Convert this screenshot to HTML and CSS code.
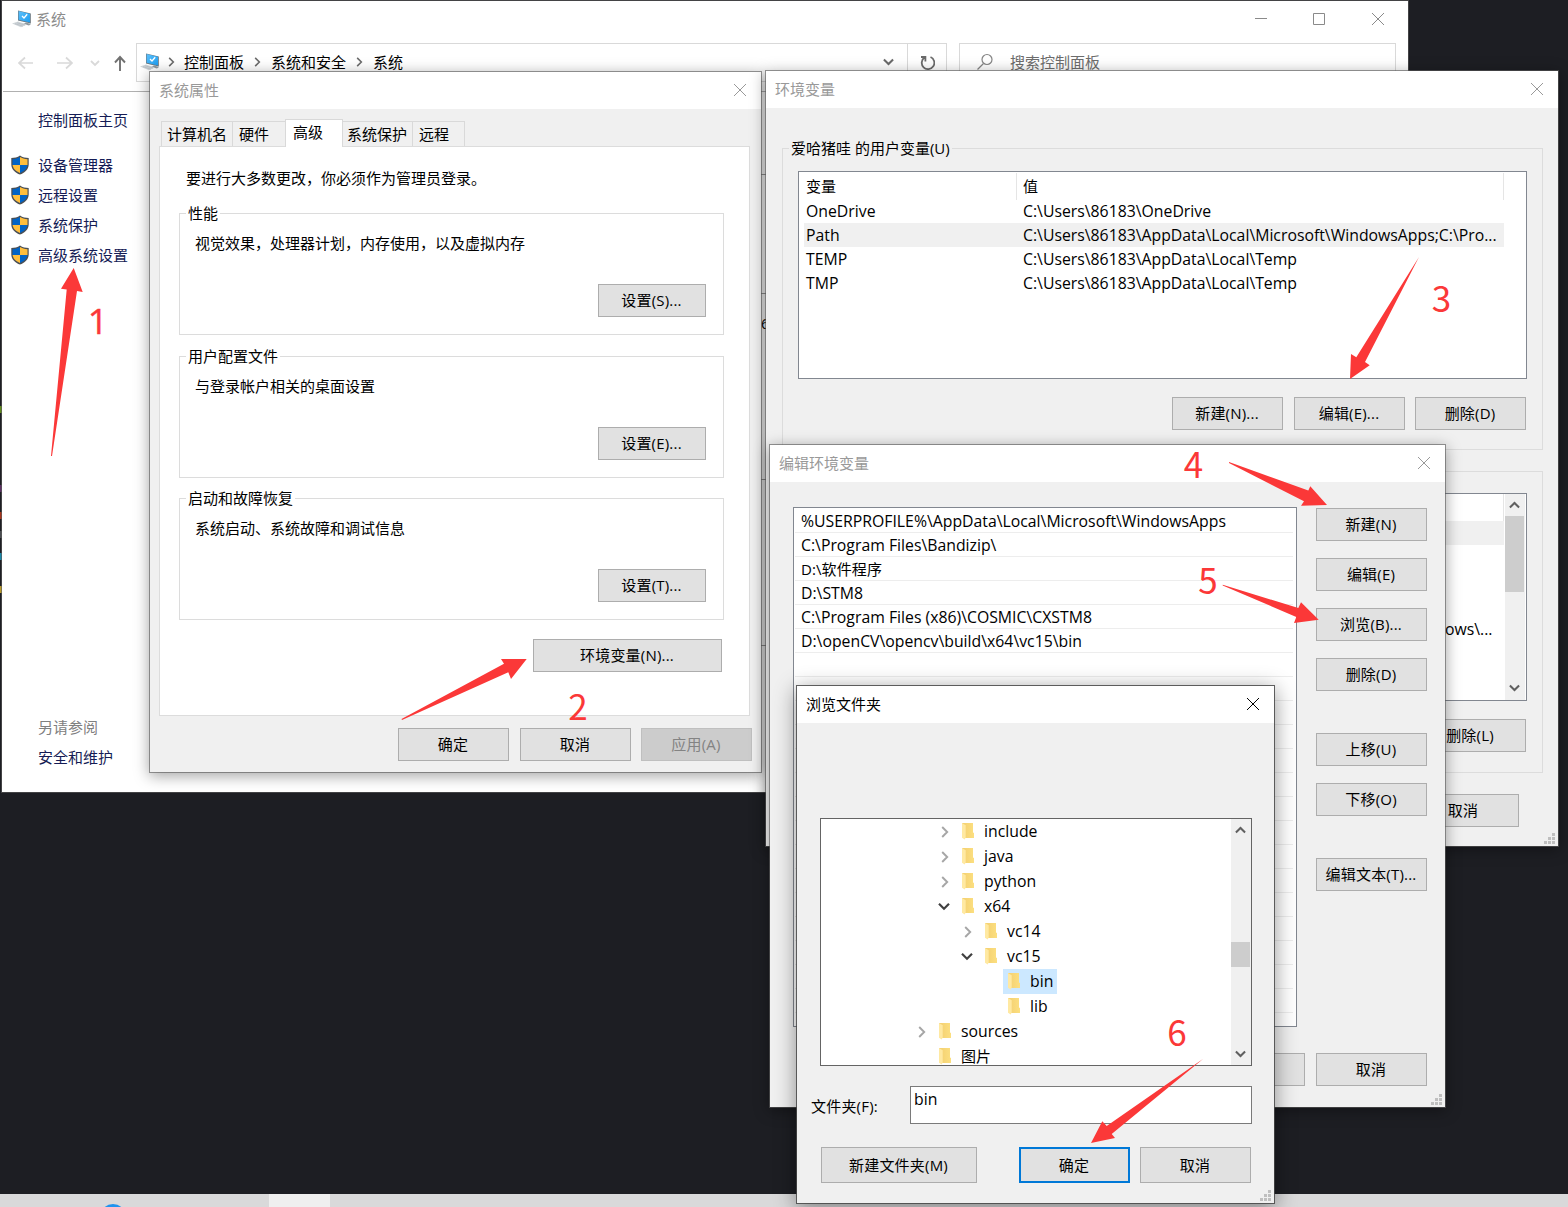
FILE: index.html
```html
<!DOCTYPE html>
<html lang="zh-CN">
<head>
<meta charset="utf-8">
<title>系统</title>
<link rel="stylesheet" href="styles.css">
</head>
<body>
<svg class="defs" width="0" height="0" aria-hidden="true">
  <defs>
    <linearGradient id="folder-front" x1="0" x2="1" y1="0" y2="0"><stop offset="0" stop-color="#f3cf70"/><stop offset="1" stop-color="#fcdf80"/></linearGradient>
    <linearGradient id="screen-blue" x1="0" x2="1" y1="0" y2="1"><stop offset="0" stop-color="#5cc0fb"/><stop offset="1" stop-color="#1d9df0"/></linearGradient>
  </defs>
  <symbol id="close" viewBox="0 0 14 14"><path d="M1 1L13 13M13 1L1 13" fill="none" stroke="currentColor"/></symbol>
  <symbol id="shield" viewBox="0 0 18 20">
    <path d="M9 .5C6.500 2.300 3.500 3 .3 3V9.500C.3 14.500 4.500 18 9 19.600 13.500 18 17.700 14.500 17.700 9.500V3C14.500 3 11.500 2.300 9 .5Z" fill="#4a4f55"/>
    <path d="M9 2C7 3.300 4.500 4 1.500 4.200V10H9Z" fill="#0063c6"/><path d="M9 2C11 3.300 13.500 4 16.500 4.200V10H9Z" fill="#ffbe3c"/>
    <path d="M1.600 10H9V18C5 16.500 2 13.500 1.600 10Z" fill="#ffbe3c"/><path d="M16.400 10H9V18C13 16.500 16 13.500 16.400 10Z" fill="#0063c6"/>
  </symbol>
  <symbol id="pc" viewBox="0 0 20 18">
    <path d="M14 12.500L19 14 17 15.500 11 14Z" fill="#8e989f"/>
    <path d="M6 .5L18.800 3.500V13.500L6 10.500Z" fill="#69757d"/>
    <path d="M6.600 1L18 3.700V12.400L6.600 9.700Z" fill="url(#screen-blue)"/>
    <path d="M10 6L12 8 15.200 4.300" fill="none" stroke="#fff" stroke-width="1.300"/>
    <path d="M0 13.500L6 11.500 15 14.500 9 17.300Z" fill="#cfd5d9"/><path d="M3 13.700L11 16.200M5 12.800L13 15" stroke="#aeb6bc" stroke-width=".6"/>
  </symbol>
  <symbol id="folder" viewBox="0 0 13 18">
    <path d="M1 1H12V10.500L13 11V16H2Z" fill="url(#folder-front)"/>
    <path d="M1 1L4.700 3.300V15.500L3.700 17.500 1 15.800Z" fill="#ffe9a2"/>
  </symbol>
  <symbol id="right" viewBox="0 0 8 12"><path d="M1.200 1L6.200 6 1.200 11" fill="none" stroke="currentColor" stroke-width="1.900"/></symbol>
  <symbol id="down" viewBox="0 0 12 8"><path d="M1 1.200L6 6.200 11 1.200" fill="none" stroke="currentColor" stroke-width="2.200"/></symbol>
  <symbol id="up" viewBox="0 0 12 8"><path d="M1 6.800L6 1.800 11 6.800" fill="none" stroke="currentColor" stroke-width="2.200"/></symbol>
  <symbol id="grip" viewBox="0 0 11 11"><path d="M8 0h3v3h-3zM4 4h3v3h-3zM8 4h3v3h-3zM0 8h3v3h-3zM4 8h3v3h-3zM8 8h3v3h-3z" fill="#bfbfbf"/></symbol>
</svg>

<div class="desktop">
  <div class="edge">
    <i class="green"></i><i class="purple"></i><i class="red"></i><i class="gray"></i><i class="cyan"></i><i class="yellow"></i>
  </div>

  <footer class="taskbar"><span class="browser"></span><span class="task"></span></footer>

  <section class="window system">
    <header class="system-title">
      <svg class="pc"><use href="#pc"/></svg><span>系统</span>
      <svg class="controls" width="132" height="14" viewBox="0 0 132 14" fill="none" stroke="#8a8a8a"><path d="M1 6.500H13M59.500 1.500h11v11h-11zM118 1L130 13M130 1L118 13"/></svg>
    </header>
    <nav class="nav">
      <svg class="history" width="112" height="18" viewBox="0 0 112 18" fill="none">
        <g stroke="#d9d9d9" stroke-width="1.700"><path d="M15 10H1M7 4.500L1 10L7 15.500M39 10H54M48 4.500L54 10L48 15.500"/><path d="M73 8L77 12L81 8" stroke-width="1.800"/></g>
        <path d="M102 18V4M97 9.500L102 4L107 9.500" stroke="#717171" stroke-width="1.900"/>
      </svg>
      <div class="address">
        <svg class="pc"><use href="#pc"/></svg>
        <svg class="crumb"><use href="#right"/></svg><span>控制面板</span>
        <svg class="crumb"><use href="#right"/></svg><span>系统和安全</span>
        <svg class="crumb"><use href="#right"/></svg><span>系统</span>
        <svg class="drop"><use href="#down"/></svg>
        <span class="refresh"><svg width="16" height="16" viewBox="0 0 16 16" fill="none" stroke="#6b6b6b" stroke-width="1.800"><path d="M11.500 3A6.300 6.300 0 1 1 5.500 3.600M2 3H6.400V7.500"/></svg></span>
      </div>
      <div class="search"><svg width="18" height="18" viewBox="0 0 18 18" fill="none" stroke="#858585" stroke-width="1.200"><circle cx="11" cy="6.500" r="5"/><path d="M7.500 10.500L1.500 16.500"/></svg><span>搜索控制面板</span></div>
    </nav>
    <div class="system-body">
      <aside class="side">
        <a class="home">控制面板主页</a>
        <a><svg><use href="#shield"/></svg>设备管理器</a>
        <a><svg><use href="#shield"/></svg>远程设置</a>
        <a><svg><use href="#shield"/></svg>系统保护</a>
        <a><svg><use href="#shield"/></svg>高级系统设置</a>
        <span class="see-also">另请参阅</span>
        <a class="plain">安全和维护</a>
      </aside>
      <div class="details"><hr><hr><span>6</span><hr><hr></div>
    </div>
  </section>

  <section class="window props">
    <header class="bar"><span>系统属性</span><svg><use href="#close"/></svg></header>
    <div class="tabs"><span class="t1">计算机名</span><span class="t2">硬件</span><span class="active">高级</span><span class="t3">系统保护</span><span class="t4">远程</span></div>
    <div class="page">
      <p class="lead">要进行大多数更改，你必须作为管理员登录。</p>
      <fieldset><legend>性能</legend><p>视觉效果，处理器计划，内存使用，以及虚拟内存</p><button>设置(S)...</button></fieldset>
      <fieldset><legend>用户配置文件</legend><p>与登录帐户相关的桌面设置</p><button>设置(E)...</button></fieldset>
      <fieldset class="last"><legend>启动和故障恢复</legend><p>系统启动、系统故障和调试信息</p><button>设置(T)...</button></fieldset>
      <button class="env-button">环境变量(N)...</button>
    </div>
    <div class="actions"><button>确定</button><button>取消</button><button disabled>应用(A)</button></div>
  </section>

  <section class="window env">
    <header class="bar"><span>环境变量</span><svg><use href="#close"/></svg></header>
    <fieldset class="user-vars">
      <legend>爱哈猪哇 的用户变量(U)</legend>
      <div class="vars">
        <div class="head"><span>变量</span><span>值</span></div>
        <div class="row"><span>OneDrive</span><span>C:\Users\86183\OneDrive</span></div>
        <div class="row selected"><span>Path</span><span>C:\Users\86183\AppData\Local\Microsoft\WindowsApps;C:\Pro...</span></div>
        <div class="row"><span>TEMP</span><span>C:\Users\86183\AppData\Local\Temp</span></div>
        <div class="row"><span>TMP</span><span>C:\Users\86183\AppData\Local\Temp</span></div>
      </div>
      <div class="var-actions"><button>新建(N)...</button><button>编辑(E)...</button><button>删除(D)</button></div>
    </fieldset>
    <fieldset class="system-vars">
      <legend></legend>
      <div class="vars scrolled">
        <div class="rows"><div class="head"></div><div class="band"></div><div class="tail">ows\...</div></div>
        <div class="scroll"><svg><use href="#up"/></svg><i></i><svg><use href="#down"/></svg></div>
      </div>
      <div class="var-actions"><button>删除(L)</button></div>
    </fieldset>
    <div class="confirm"><button>取消</button></div>
    <svg class="grip"><use href="#grip"/></svg>
  </section>

  <section class="window edit">
    <header class="bar"><span>编辑环境变量</span><svg><use href="#close"/></svg></header>
    <div class="edit-body">
      <ul class="paths">
        <li>%USERPROFILE%\AppData\Local\Microsoft\WindowsApps</li>
        <li>C:\Program Files\Bandizip\</li>
        <li class="mixed">D:\软件程序</li>
        <li>D:\STM8</li>
        <li>C:\Program Files (x86)\COSMIC\CXSTM8</li>
        <li>D:\openCV\opencv\build\x64\vc15\bin</li>
      </ul>
      <div class="stack">
        <button>新建(N)</button><button>编辑(E)</button><button>浏览(B)...</button><button>删除(D)</button>
        <button class="apart">上移(U)</button><button>下移(O)</button>
        <button class="apart">编辑文本(T)...</button>
      </div>
    </div>
    <div class="confirm"><button></button><button>取消</button></div>
    <svg class="grip"><use href="#grip"/></svg>
  </section>

  <section class="window browse">
    <header class="bar"><span>浏览文件夹</span><svg><use href="#close"/></svg></header>
    <div class="tree">
      <ul>
        <li class="l2"><svg class="tw"><use href="#right"/></svg><span><svg><use href="#folder"/></svg>include</span></li>
        <li class="l2"><svg class="tw"><use href="#right"/></svg><span><svg><use href="#folder"/></svg>java</span></li>
        <li class="l2"><svg class="tw"><use href="#right"/></svg><span><svg><use href="#folder"/></svg>python</span></li>
        <li class="l2"><svg class="tw open"><use href="#down"/></svg><span><svg><use href="#folder"/></svg>x64</span></li>
        <li class="l3"><svg class="tw"><use href="#right"/></svg><span><svg><use href="#folder"/></svg>vc14</span></li>
        <li class="l3"><svg class="tw open"><use href="#down"/></svg><span><svg><use href="#folder"/></svg>vc15</span></li>
        <li class="l4"><svg class="tw"></svg><span class="picked"><svg><use href="#folder"/></svg>bin</span></li>
        <li class="l4"><svg class="tw"></svg><span><svg><use href="#folder"/></svg>lib</span></li>
        <li class="l1"><svg class="tw"><use href="#right"/></svg><span><svg><use href="#folder"/></svg>sources</span></li>
        <li class="l1 mixed"><svg class="tw"></svg><span><svg><use href="#folder"/></svg>图片</span></li>
      </ul>
      <div class="scroll"><svg><use href="#up"/></svg><i></i><svg><use href="#down"/></svg></div>
    </div>
    <div class="field"><label>文件夹(F):</label><div class="input">bin</div></div>
    <div class="browse-actions"><button class="new">新建文件夹(M)</button><button class="primary">确定</button><button>取消</button></div>
    <svg class="grip"><use href="#grip"/></svg>
  </section>

  <svg class="notes" width="1568" height="1207" viewBox="0 0 1568 1207">
    <path d="M73.700 268L82.700 292L77 291L52 456H51L66.700 289.500L61 288.700Z"/>
    <path d="M526.700 659L511 679L508.300 672.300L402 720L401.500 719L504 663.700L501 659Z"/>
    <path d="M1350 379L1351 354L1356.300 357.300L1419 257L1365 362L1369.700 365.300Z"/>
    <path d="M1327 505L1301 505.700L1304 501.300L1229 463V462L1308.300 490.500L1310.300 486.300Z"/>
    <path d="M1318.700 619.700L1294 623L1296.300 617L1222.700 585.500V584.800L1298.300 608L1301 602.300Z"/>
    <path d="M1091 1143L1102.300 1121.300L1106.700 1126L1203.300 1058.700L1111.700 1134L1115 1138Z"/>
    <text class="one" x="98" y="334">1</text><text x="578" y="719.500">2</text><text x="1441.500" y="311.500">3</text>
    <text x="1193.500" y="477.500">4</text><text x="1208" y="594">5</text><text x="1177" y="1045.500">6</text>
  </svg>
</div>
</body>
</html>
```
FILE: styles.css
```css
* { box-sizing: border-box; }
body { margin: 0; font: 15px/22px "Open Sans", "Noto Sans CJK SC", sans-serif; letter-spacing: 0; color: #000; white-space: nowrap; }
p, ul, hr { margin: 0; padding: 0; }
ul { list-style: none; }
svg { display: block; flex: none; }
.defs { position: absolute; }
.desktop { position: relative; width: 1568px; height: 1207px; overflow: hidden; background: #1d1e23; }

.edge { position: absolute; left: 0; top: 406px; width: 2px; }
.edge i { display: block; height: 7px; }
.green { background: #5f8a1c; }
.purple { margin-top: 72px; background: #5b2f62; }
.red { margin-top: 20px; background: #a5341b; }
.gray { margin-top: 12px; background: #4a4c50; }
.cyan { margin-top: 15px; background: #1a87a8; }
.yellow { margin-top: 26px; background: #b89a2a; }

.taskbar { position: absolute; left: 0; top: 1194px; width: 1568px; height: 13px; display: flex; background: #d9d9da; overflow: hidden; }
.browser { width: 26px; height: 26px; margin: 10px 0 0 100px; border-radius: 50%; background: #2093ee; flex: none; }
.task { width: 61px; margin-left: 143px; background: #efefef; }

.window { position: absolute; display: flex; flex-direction: column; border: 1px solid rgba(90, 90, 90, .62); background: #f0f0f0; background-clip: padding-box; box-shadow: 0 3px 14px rgba(0, 0, 0, .36); }
.system { left: 1px; top: 0; width: 1408px; height: 793px; background-color: #fff; box-shadow: none; }
.props { left: 149px; top: 71px; width: 613px; height: 702px; }
.env { left: 765px; top: 70px; width: 794px; height: 777px; }
.edit { left: 769px; top: 444px; width: 677px; height: 664px; }
.browse { left: 796px; top: 685px; width: 479px; height: 519px; border-color: rgba(70, 70, 70, .85); box-shadow: 0 4px 20px rgba(0, 0, 0, .42); }

.bar { display: flex; justify-content: space-between; align-items: center; flex: none; height: 37px; padding: 0 14px 2px 9px; background: #fff; color: #999; }
.bar svg { width: 14px; height: 14px; }
.browse .bar { color: #000; }

button { flex: none; width: 111px; height: 33px; padding: 0 1px 0 0; border: 1px solid #adadad; border-radius: 0; background: #e1e1e1; color: #000; font: inherit; letter-spacing: .2px; line-height: 29px; text-align: center; }
button:disabled { border-color: #bfbfbf; background: #ccc; color: #838383; }
fieldset { min-width: 0; margin: 0; padding: 0 0 0 6px; border: 1px solid #dcdcdc; }
legend { height: 21px; padding: 0 2px; line-height: 20px; }
.grip { position: absolute; right: 3px; bottom: 2px; width: 11px; height: 11px; }

.system-title { display: flex; align-items: center; height: 36px; padding: 0 22px 0 10px; color: #8c8c8c; }
.pc { width: 20px; height: 18px; }
.system-title span { margin-left: 4px; }
.controls { margin-left: auto; }
.nav { display: flex; align-items: center; height: 54px; padding: 0 12px 4px 16px; }
.address { display: flex; align-items: center; width: 811px; height: 39px; margin-left: 6px; padding-left: 3px; border: 1px solid #d9d9d9; }
.crumb { width: 7px; height: 10px; margin: 0 9px 0 8px; color: #6b6b6b; }
.address span + .crumb { margin: 0 10px; }
.drop { width: 11px; height: 8px; margin-left: auto; color: #6b6b6b; }
.refresh { display: flex; align-items: center; justify-content: center; width: 39px; height: 37px; margin-left: 13px; border-left: 1px solid #d9d9d9; }
.search { display: flex; align-items: center; width: 437px; height: 39px; margin-left: 12px; padding-left: 16px; border: 1px solid #d9d9d9; color: #6d6d6d; }
.search span { margin-left: 16px; }
.system-body { display: flex; flex: 1; border-top: 1px solid #b0b0b0; margin: 0 0 0 1px; }
.side { display: flex; flex-direction: column; width: 147px; padding: 13px 0 0 8px; color: #151c55; }
.side a { display: flex; align-items: center; height: 30px; gap: 9px; }
.side svg { width: 18px; height: 20px; }
.side .home { padding-left: 27px; margin-bottom: 15px; }
.side .see-also { height: 30px; margin-top: 442px; padding-left: 27px; line-height: 30px; color: #808080; }
.side .plain { padding-left: 27px; }
.details { width: 640px; padding: 82px 0 0 611px; }
.details hr { height: 1px; border: 0; background: #999; }
.details hr + hr { margin-top: 118px; }
.details span { display: block; height: 22px; margin-top: 18px; }
.details span + hr { margin-top: 145px; }
.details hr:last-child { margin-top: 165px; }

.tabs { display: flex; align-items: flex-end; flex: none; height: 27px; margin: 10px 0 0 11px; }
.tabs span { height: 25px; padding-left: 5px; border: 1px solid #d9d9d9; border-bottom: 0; border-left: 0; line-height: 24px; }
.tabs .t1 { width: 72px; border-left: 1px solid #d9d9d9; }
.tabs .t2 { width: 52px; padding-left: 6px; border-right: 0; }
.tabs .active { position: relative; z-index: 1; width: 58px; height: 28px; margin-bottom: -1px; padding-left: 7px; border-left: 1px solid #d9d9d9; background: #fff; }
.tabs .t3 { width: 70px; padding-left: 4px; }
.tabs .t4 { width: 52px; padding-left: 6px; }
.page { width: 591px; height: 570px; flex: none; margin-left: 9px; padding: 20px 0 0 19px; border: 1px solid #dcdcdc; background: #fff; }
.lead { height: 36px; padding-left: 7px; }
.page fieldset { width: 545px; height: 132px; margin-bottom: 11px; }
.page fieldset + fieldset { margin-bottom: 10px; }
.page fieldset p { margin: 8px 0 30px 9px; }
.page fieldset button { display: block; width: 108px; margin-left: 412px; }
.page .last { margin-bottom: 19px !important; }
.page .env-button { display: block; width: 189px; margin-left: 354px; }
.actions { display: flex; justify-content: flex-end; gap: 10px; padding: 12px 9px 0 0; }
.actions button:first-child { margin-right: 1px; }

.user-vars, .system-vars { flex: none; width: 761px; margin-left: 16px; height: 312px; }
.user-vars { margin-top: 30px; }
.system-vars { margin-top: 11px; }
.vars { width: 729px; height: 208px; margin: 12px 0 18px 9px; padding: 1px 0 0 5px; border: 1px solid #828790; background: #fff; }
.system-vars .vars { margin-top: 11px; }
.head { display: flex; width: 700px; height: 27px; border-right: 1px solid #e5e5e5; padding-left: 2px; line-height: 27px; }
.head span:first-child { width: 211px; border-right: 1px solid #e5e5e5; }
.head span:last-child { padding-left: 6px; }
.row { display: flex; width: 700px; height: 24px; padding-left: 2px; font-size: 15.800px; line-height: 25px; }
.user-vars .head { margin-bottom: -1px; }
.row span:first-child { width: 217px; }
.selected { background: #f0f0f0; }
.var-actions { display: flex; justify-content: flex-end; gap: 10px; padding-right: 16px; }
.var-actions button:first-child:not(:last-child) { margin-right: 1px; }
.scrolled { display: flex; padding-top: 0; }
.band { width: 700px; height: 24px; background: #f0f0f0; }
.tail { margin: 73px 0 0 641px; font-size: 15.800px; }
.scroll { display: flex; flex-direction: column; align-items: center; width: 20px; padding-right: 1px; background: #f0f0f0; color: #606060; }
.scroll svg { width: 11px; height: 8px; margin: 7px 0; }
.scroll i { width: 19px; height: 76px; background: #cdcdcd; }
.scroll svg:last-child { margin-top: auto; margin-bottom: 8px; }
.scrolled .scroll { margin-left: 1px; }
.env .confirm { display: flex; justify-content: flex-end; padding: 21px 39px 0 0; }

.edit-body { display: flex; justify-content: space-between; flex: none; height: 545px; padding: 25px 18px 0 23px; }
.paths { width: 504px; height: 520px; padding: 1px 3px 0 1px; border: 1px solid #828790; background: repeating-linear-gradient(#fff 0 23px, #ededed 23px 24px) content-box, #fff; }
.paths li { height: 24px; padding-left: 6px; font-size: 15.800px; line-height: 25px; }
.paths .mixed { font-size: 15px; line-height: 24px; letter-spacing: .1px; }
.stack { display: flex; flex-direction: column; gap: 17px; padding-top: 1px; }
.apart { margin-top: 25px; }
.edit .confirm { display: flex; justify-content: flex-end; gap: 11px; padding: 26px 18px 0 0; }

.tree { display: flex; justify-content: space-between; flex: none; width: 432px; height: 248px; margin: 95px 0 0 23px; border: 1px solid #646464; background: #fff; overflow: hidden; }
.tree li { display: flex; align-items: center; height: 25px; font-size: 15.800px; }
.tree .mixed { font-size: 15px; }
.tree .l1 { padding-left: 94px; }
.tree .l2 { padding-left: 117px; }
.tree .l3 { padding-left: 140px; }
.tree .l4 { padding-left: 163px; }
.tw { width: 16px; height: 12px; color: #a6a6a6; }
.open { height: 9px; width: 12px; margin-right: 4px; color: #404040; }
.tw:not(.open) { width: 8px; margin: 0 5px 0 3px; }
.tree li span { display: flex; align-items: center; height: 25px; margin-left: 3px; padding: 0 4px 2px; }
.tree li span svg { width: 13px; height: 18px; margin-right: 10px; }
.tree .picked { background: #cce8ff; }
.tree .scroll i { height: 25px; margin-top: 101px; }
.tree .scroll svg:last-child { margin-bottom: 7px; }
.field { display: flex; align-items: center; flex: none; height: 38px; margin: 20px 0 0 14px; }
.field label { width: 99px; padding-top: 1px; letter-spacing: .2px; }
.input { width: 342px; height: 38px; padding: 1px 3px; border: 1px solid #7a7a7a; background: #fff; font-size: 15.800px; }
.browse-actions { display: flex; padding: 23px 0 0 24px; }
.browse-actions button { height: 36px; }
.browse-actions .new { width: 156px; margin-right: 42px; }
.browse-actions .primary { margin-right: 10px; border: 2px solid #0078d7; }

.notes { position: absolute; left: 0; top: 0; fill: #fb3838; font-family: "Noto Sans CJK SC", sans-serif; font-size: 35px; text-anchor: middle; pointer-events: none; }
.one { font-family: "Open Sans", sans-serif; font-size: 35.500px; stroke: #fb3838; stroke-width: .4px; }
```
